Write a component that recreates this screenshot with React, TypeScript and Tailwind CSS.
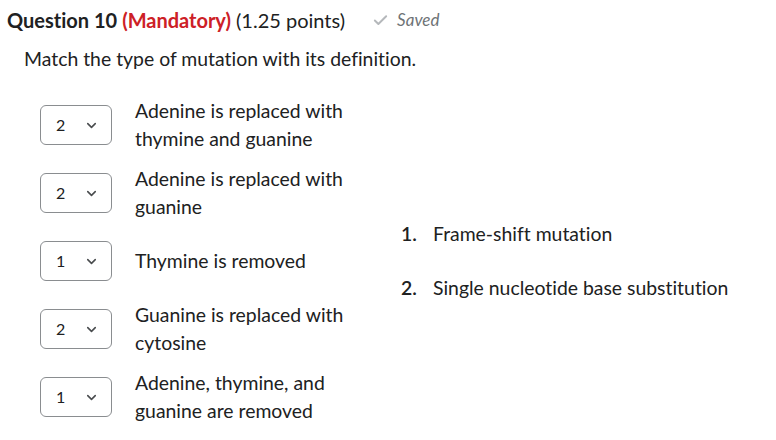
import { Check, ChevronDown } from 'lucide-react'

const rows = [
  { value: '2', text: 'Adenine is replaced with thymine and guanine' },
  { value: '2', text: 'Adenine is replaced with guanine' },
  { value: '1', text: 'Thymine is removed' },
  { value: '2', text: 'Guanine is replaced with cytosine' },
  { value: '1', text: 'Adenine, thymine, and guanine are removed' },
]

const choices = ['Frame-shift mutation', 'Single nucleotide base substitution']

function Select({ value }: { value: string }) {
  return (
    <div className="w-[72px] h-[40px] shrink-0 border border-[#8a8d90] rounded-[6px] flex items-center pl-[15px] pr-[12px] justify-between bg-white">
      <span className="text-[16px] text-[#202122]">{value}</span>
      <ChevronDown size={15} strokeWidth={2.5} className="text-[#494c4e]" />
    </div>
  )
}

export default function App() {
  return (
    <div className="w-[776px] h-[440px] bg-white text-[#202122] font-['Lato',sans-serif] [font-variant-ligatures:none] overflow-hidden">
      <div className="flex items-baseline pl-[7px] pt-[6px] leading-[28px]">
        <h2 className="text-[20px] font-bold">Question 10</h2>
        <span className="text-[20px] font-bold text-[#cd2026] ml-[5px]">(Mandatory)</span>
        <span className="text-[20px] ml-[5px]">(1.25 points)</span>
        <span className="flex items-center ml-[27px] text-[#6e7376] self-center">
          <Check size={17} strokeWidth={2.75} className="text-[#b5b8bb]" />
          <span className="italic text-[17px] ml-[8px]">Saved</span>
        </span>
      </div>

      <p className="pl-[24px] mt-[11px] text-[19.4px] leading-[28px]">Match the type of mutation with its definition.</p>

      <div className="flex mt-[24px] pl-[40px]">
        <div className="flex flex-col gap-[12px]">
          {rows.map((row, i) => (
            <div key={i} className="flex items-center h-[56px]">
              <Select value={row.value} />
              <div className="ml-[23px] w-[240px] text-[19.4px] leading-[28px]">{row.text}</div>
            </div>
          ))}
        </div>

        <ol className="flex flex-col justify-center gap-[26px] ml-[26px] text-[19.4px] leading-[28px]">
          {choices.map((c, i) => (
            <li key={i} className="flex">
              <span className="w-[32px] font-semibold">{i + 1}.</span>
              <span>{c}</span>
            </li>
          ))}
        </ol>
      </div>
    </div>
  )
}
